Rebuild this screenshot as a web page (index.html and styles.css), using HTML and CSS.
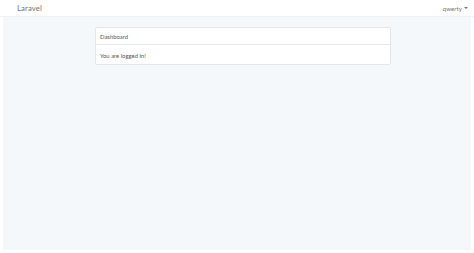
FILE: index.html
```html
<!DOCTYPE html>
<html>
<head>
<meta charset="utf-8">
<link rel="stylesheet" href="styles.css">
</head>
<body>
<nav class="navbar">
  <span class="brand">Laravel</span>
  <span class="user">qwerty <span class="caret"></span></span>
</nav>
<main class="main">
  <div class="card">
    <div class="card-header">Dashboard</div>
    <div class="card-body">You are logged in!</div>
  </div>
</main>
</body>
</html>
```
FILE: styles.css
```css
html, body { margin: 0; padding: 0; background: #fff; }
body {
  font-family: Lato, "Open Sans", sans-serif;
  color: #212529;
  height: 253px;
  display: flex;
  flex-direction: column;
}
.navbar {
  height: 17px;
  flex: none;
  display: flex;
  align-items: center;
  justify-content: space-between;
  padding: 0 6px 0 17px;
  background: #fff;
  border-bottom: 1px solid #eef2f6;
  box-sizing: border-box;
}
.brand { font-size: 7.8px; color: #777; letter-spacing: 0.1px; }
.user { font-size: 6.2px; color: #777; display: flex; align-items: center; gap: 2px; }
.caret {
  width: 0; height: 0;
  border-left: 2px solid transparent;
  border-right: 2px solid transparent;
  border-top: 2px solid #777;
}
.main {
  flex: 1;
  margin: 0 3px 3px 3px;
  background: #f5f8fb;
  padding: 10px 0 0 92px;
  display: flex;
  justify-content: flex-start;
  align-items: flex-start;
}
.card {
  width: 296px;
  height: 38px;
  background: #fff;
  border: 1px solid #e3e7eb;
  border-radius: 2px;
  box-sizing: border-box;
  font-size: 5.9px;
  color: #555;
}
.card-header {
  height: 17px;
  box-sizing: border-box;
  padding: 0 4px;
  display: flex;
  align-items: center;
  border-bottom: 1px solid #e6e9ec;
}
.card-body {
  height: 20px;
  padding: 0 4px;
  display: flex;
  align-items: center;
}
```
